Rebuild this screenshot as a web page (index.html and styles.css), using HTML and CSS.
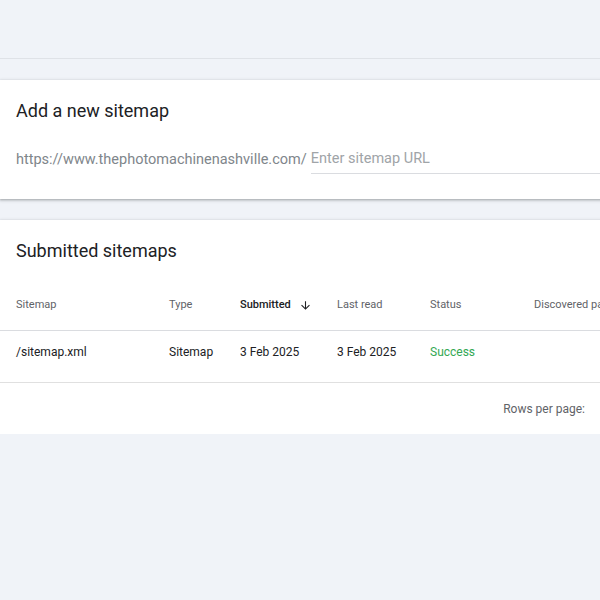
FILE: index.html
```html
<!DOCTYPE html>
<html lang="en">
<head>
  <meta charset="UTF-8">
  <title>Sitemaps</title>
  <link rel="stylesheet" href="styles.css">
</head>
<body>
  <div class="topbar"></div>
  <div class="content">
    <!-- Add sitemap card -->
    <div class="card add-card">
      <h2 class="card-title">Add a new sitemap</h2>
      <div class="url-row">
        <span class="url-prefix">https://www.thephotomachinenashville.com/</span>
        <input type="text" class="url-input" placeholder="Enter sitemap URL">
      </div>
    </div>

    <!-- Submitted sitemaps card -->
    <div class="card table-card">
      <h2 class="card-title">Submitted sitemaps</h2>
      <div class="table">
        <div class="row head">
          <div>Sitemap</div>
          <div>Type</div>
          <div class="sorted">Submitted
            <svg class="sort-icon" viewBox="0 0 24 24" width="13" height="13"><path d="M20 12l-1.41-1.41L13 16.17V4h-2v12.17l-5.58-5.59L4 12l8 8 8-8z"/></svg>
          </div>
          <div>Last read</div>
          <div>Status</div>
          <div>Discovered pages</div>
        </div>
        <div class="row">
          <div>/sitemap.xml</div>
          <div>Sitemap</div>
          <div>3 Feb 2025</div>
          <div>3 Feb 2025</div>
          <div class="ok">Success</div>
          <div></div>
        </div>
      </div>
      <div class="table-footer">
        <span>Rows per page:</span>
      </div>
    </div>
  </div>
</body>
</html>
```

FILE: styles.css
```css
body {
  margin: 0;
  background: #f0f3f8;
  font-family: Roboto, "Noto Sans", Arial, sans-serif;
  color: #202124;
  overflow: hidden;
}
.topbar {
  height: 58px;
  border-bottom: 1px solid #dfe2e7;
}
.content {
  padding-top: 21px;
  display: flex;
  flex-direction: column;
  gap: 21px;
}
.card {
  width: 680px;
  background: #fff;
  box-shadow: 0 1px 2px rgba(60,64,67,0.3), 0 1px 3px 1px rgba(60,64,67,0.15);
}
.card-title {
  margin: 0;
  padding: 19px 16px 0;
  font-size: 18px;
  line-height: 24px;
  font-weight: 400;
}
.add-card {
  height: 119px;
}
.url-row {
  display: flex;
  align-items: flex-end;
  padding: 26px 0 0 16px;
}
.url-prefix {
  font-size: 14.5px;
  line-height: 20px;
  color: #80868b;
  padding-bottom: 4px;
  margin-right: 4px;
}
.url-input {
  flex: 1;
  border: none;
  border-bottom: 1px solid #dadce0;
  padding: 0 0 4px 0;
  font-family: inherit;
  font-size: 14.5px;
  line-height: 20px;
  outline: none;
}
.url-input::placeholder {
  color: #a0a4a8;
}
.table {
  margin-top: 15px;
}
.row {
  display: grid;
  grid-template-columns: 153px 71px 97px 93px 104px 1fr;
  align-items: start;
  padding: 11px 0 0 16px;
  height: 40px;
  line-height: 20px;
  border-bottom: 1px solid #e0e0e0;
  font-size: 12px;
}
.row.head {
  align-items: center;
  padding-top: 2px;
  height: 50px;
  font-size: 11px;
  color: #5f6368;
  border-bottom-color: #dadce0;
}
.sorted {
  display: flex;
  align-items: center;
  gap: 8px;
  color: #202124;
  font-weight: 500;
}
.sort-icon {
  fill: #202124;
}
.ok {
  color: #34a853;
}
.table-footer {
  height: 51px;
  display: flex;
  align-items: center;
  justify-content: flex-end;
  padding-right: 95px;
  font-size: 12px;
  color: #5f6368;
}
```
